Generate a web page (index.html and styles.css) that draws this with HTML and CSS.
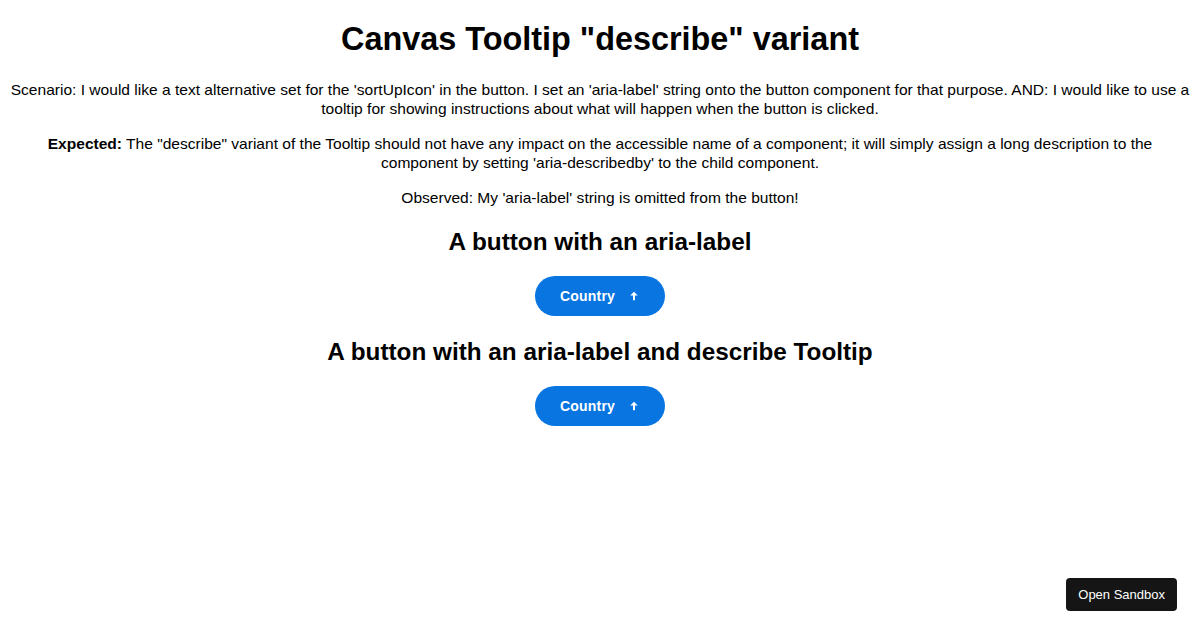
FILE: index.html
```html
<!DOCTYPE html>
<html lang="en">
<head>
<meta charset="utf-8">
<title>Canvas Tooltip describe variant</title>
<link rel="stylesheet" href="styles.css">
</head>
<body>
<main class="page">
  <h1 class="title">Canvas Tooltip "describe" variant</h1>
  <p class="text">Scenario: I would like a text alternative set for the 'sortUpIcon' in the button. I set an 'aria-label' string onto the button component for that purpose. AND: I would like to use a tooltip for showing instructions about what will happen when the button is clicked.</p>
  <p class="text"><strong>Expected:</strong> The "describe" variant of the Tooltip should not have any impact on the accessible name of a component; it will simply assign a long description to the component by setting 'aria-describedby' to the child component.</p>
  <p class="text">Observed: My 'aria-label' string is omitted from the button!</p>
  <h2 class="subtitle">A button with an aria-label</h2>
  <div class="row">
    <button class="btn" aria-label="Sort ascending">
      <span class="btn-label">Country</span>
      <svg class="btn-icon" width="24" height="24" viewBox="0 0 24 24" aria-hidden="true">
        <path d="M12 7.8 L15.8 11.6 L13 11.6 L13 16.2 L11 16.2 L11 11.6 L8.2 11.6 Z" fill="#fff"/>
      </svg>
    </button>
  </div>
  <h2 class="subtitle">A button with an aria-label and describe Tooltip</h2>
  <div class="row">
    <button class="btn" aria-describedby="tip">
      <span class="btn-label">Country</span>
      <svg class="btn-icon" width="24" height="24" viewBox="0 0 24 24" aria-hidden="true">
        <path d="M12 7.8 L15.8 11.6 L13 11.6 L13 16.2 L11 16.2 L11 11.6 L8.2 11.6 Z" fill="#fff"/>
      </svg>
    </button>
  </div>
</main>
<a class="sandbox" href="#">Open Sandbox</a>
</body>
</html>
```

FILE: styles.css
```css
html, body {
  background: #fff;
}
body {
  margin: 8px;
  font-family: "Liberation Sans", Arial, sans-serif;
  color: #000;
  font-size: 15.56px;
}
.page {
  text-align: center;
}
.title {
  font-size: 32.4px;
  font-weight: bold;
  margin: 13.44px 0 21.44px;
  line-height: 37px;
}
.text {
  margin: 16px 0;
  line-height: 19px;
}
.subtitle {
  font-size: 24.3px;
  font-weight: bold;
  margin: 21.5px 0 20px;
  line-height: 28px;
}
.row {
  display: flex;
  justify-content: center;
}
.btn {
  display: inline-flex;
  align-items: center;
  justify-content: flex-start;
  gap: 7px;
  height: 40px;
  width: 130px;
  padding: 0 19px 0 25px;
  border: none;
  border-radius: 999px;
  background: #0875e1;
  color: #fff;
  font-family: "Liberation Sans", Arial, sans-serif;
  font-size: 14px;
  font-weight: bold;
  letter-spacing: 0.2px;
  cursor: pointer;
}
.btn-label {
  line-height: 20px;
  white-space: nowrap;
}
.btn-icon {
  display: block;
  flex: none;
}
.sandbox {
  position: fixed;
  right: 23px;
  bottom: 19px;
  background: #151515;
  color: #fff;
  font-family: "Liberation Sans", Arial, sans-serif;
  font-size: 13px;
  text-decoration: none;
  padding: 9px 12px;
  border-radius: 4px;
  line-height: 15px;
}
```
